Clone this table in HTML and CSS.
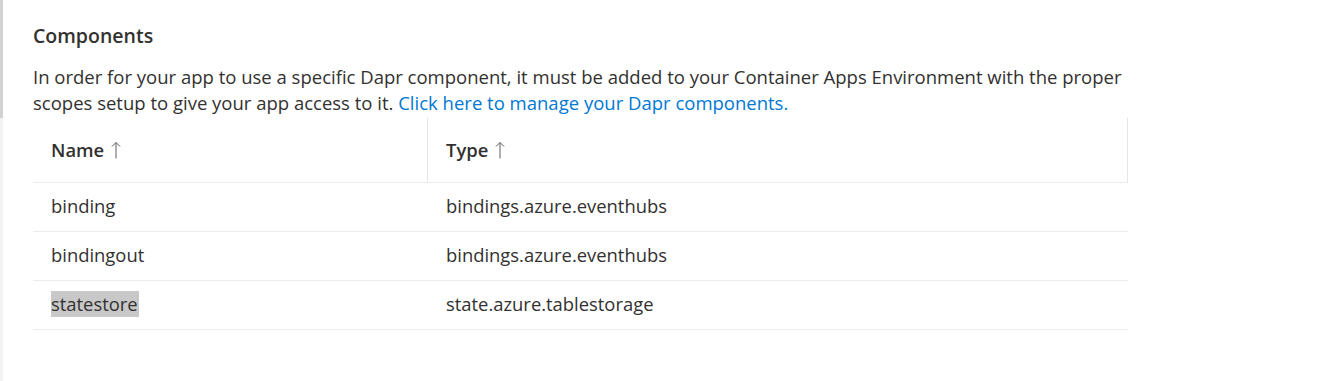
FILE: index.html
```html
<html lang="en">
  <head>
    <meta charset="UTF-8" />
    <title>Components</title>
    <link rel="stylesheet" href="styles.css">
  </head>
  <body>
    <div class="rail"></div>
    <div class="content">
      <h2 class="title">Components</h2>
      <p class="intro">
        <span>In order for your app to use a specific Dapr component, it must be added to your Container Apps Environment with the proper</span><br>
        <span>scopes setup to give your app access to it.</span> <a href="#">Click here to manage your Dapr components.</a>
      </p>
      <div class="grid">
        <div class="grid-head">
          <div class="cell head-cell name-col">
            Name
            <svg class="sort" width="10" height="18" viewBox="0 0 10 18"><path d="M5 1.5V17.5M1 5.5L5 1.5L9 5.5" fill="none" stroke="#605e5c" stroke-width="1"/></svg>
          </div>
          <div class="cell head-cell type-col">
            Type
            <svg class="sort" width="10" height="18" viewBox="0 0 10 18"><path d="M5 1.5V17.5M1 5.5L5 1.5L9 5.5" fill="none" stroke="#605e5c" stroke-width="1"/></svg>
          </div>
        </div>
        <div class="grid-row">
          <div class="cell name-col">binding</div>
          <div class="cell type-col">bindings.azure.eventhubs</div>
        </div>
        <div class="grid-row">
          <div class="cell name-col">bindingout</div>
          <div class="cell type-col">bindings.azure.eventhubs</div>
        </div>
        <div class="grid-row">
          <div class="cell name-col"><span class="selected">statestore</span></div>
          <div class="cell type-col">state.azure.tablestorage</div>
        </div>
      </div>
    </div>
  </body>
</html>
```
FILE: styles.css
```css
body {
  margin: 0;
  display: flex;
  min-height: 381px;
  background: #fff;
  color: #323130;
  font-family: "Open Sans", "Noto Sans", sans-serif;
}

.rail {
  width: 3px;
  flex-shrink: 0;
  background: linear-gradient(to bottom, #d2d2d2 0, #d2d2d2 118px, #f3f3f3 118px);
}

.content {
  padding: 23px 0 0 30px;
  width: 1095px;
}

.title {
  margin: 0;
  font-size: 19.5px;
  font-weight: 600;
  line-height: 26px;
}

.intro {
  margin: 15px 0 0 0;
  font-size: 18.5px;
  line-height: 26px;
  white-space: nowrap;
}

.intro a {
  color: #0078d4;
  text-decoration: none;
}

.grid {
  margin-top: 2px;
}

.grid-head,
.grid-row {
  display: flex;
  border-bottom: 1px solid #ebebeb;
}

.grid-head {
  height: 64px;
  border-right: 1px solid #e6e6e6;
}

.grid-row {
  height: 48px;
}

.cell {
  display: flex;
  align-items: center;
  font-size: 18.4px;
  padding: 0 0 3px 18px;
  box-sizing: border-box;
}

.name-col {
  width: 395px;
}

.type-col {
  flex: 1;
}

.head-cell {
  font-weight: 600;
  padding-bottom: 2px;
}

.head-cell.name-col {
  border-right: 1px solid #e6e6e6;
}

.sort {
  margin-left: 7px;
  margin-top: 1px;
}

.selected {
  display: inline-block;
  line-height: 26px;
  padding-right: 1px;
  background: #c8c8c8;
}
```
